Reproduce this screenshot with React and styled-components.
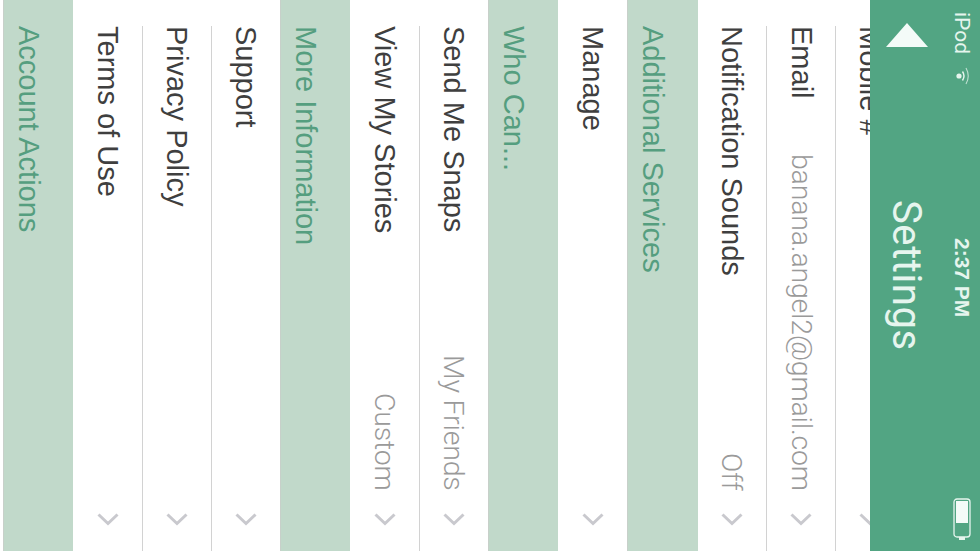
import React from "react";
import styled, { createGlobalStyle } from "styled-components";

const Global = createGlobalStyle`
  html, body {
    margin: 0;
    padding: 0;
    background: #fff;
  }
`;

const Page = styled.div`
  width: 980px;
  height: 551px;
  overflow: hidden;
  writing-mode: vertical-rl;
  display: flex;
  flex-direction: column;
  font-family: "Liberation Sans", Arial, sans-serif;
  background: #fff;
`;

const Header = styled.header`
  flex: none;
  block-size: 110px;
  inline-size: 551px;
  background: #52a583;
  color: #e6f5ee;
  display: flex;
  flex-direction: column;
`;

const StatusBar = styled.div`
  flex: none;
  block-size: 37px;
  display: flex;
  align-items: center;
  padding-inline: 12px 9px;
  box-sizing: border-box;
`;

const Carrier = styled.span`
  font-family: Roboto, sans-serif;
  font-weight: 400;
  font-size: 21px;
  margin-inline-end: 12px;
`;

const Clock = styled.span`
  margin-inline-start: 152px;
  font-size: 21px;
  font-weight: 700;
  white-space: nowrap;
`;

const Battery = styled.svg`
  margin-inline-start: auto;
  display: block;
`;

const NavBar = styled.div`
  flex: 1;
  display: flex;
  align-items: center;
  padding-inline-start: 23px;
`;

const BackArrow = styled.svg`
  flex: none;
  display: block;
`;

const Title = styled.h1`
  margin: 0;
  margin-inline-start: 153px;
  font-family: Roboto, sans-serif;
  font-size: 40px;
  font-weight: 400;
  letter-spacing: 0.6px;
  white-space: nowrap;
`;

const Scroller = styled.div`
  flex: 1;
  overflow: hidden;
  min-block-size: 0;
`;

const List = styled.div`
  margin-block-start: -33.7px;
`;

const Section = styled.div`
  block-size: 70.7px;
  box-sizing: border-box;
  padding-inline-start: 26px;
  padding-block-start: 20px;
  display: flex;
  align-items: center;
  background: #c1d9ca;
  border-block-end: 1px solid #c8d0ca;
  color: #559e7f;
  font-size: 29px;
  white-space: nowrap;
`;

const Row = styled.div`
  block-size: 68.7px;
  box-sizing: border-box;
  padding-inline-start: 26px;
  background: #fff;
`;

const RowInner = styled.div`
  block-size: 100%;
  box-sizing: border-box;
  display: flex;
  align-items: center;
  padding-inline-end: 25px;
  border-block-end: ${(p) => (p.$last ? "none" : "1.5px solid #d2d2d2")};
`;

const Label = styled.span`
  color: #3f3f3f;
  font-size: 29px;
  white-space: nowrap;
`;

const Value = styled.span`
  margin-inline-start: auto;
  color: #9a9a9a;
  font-family: Roboto, sans-serif;
  font-weight: 300;
  font-size: 28.5px;
  letter-spacing: -0.2px;
  white-space: nowrap;
`;

const Chevron = styled.svg`
  flex: none;
  display: block;
  margin-inline-start: ${(p) => (p.$alone ? "auto" : "22px")};
`;

const ChevronIcon = ({ alone }) => (
  <Chevron $alone={alone} width="22" height="13" viewBox="0 0 22 13">
    <path d="M1.5 1.5 L11 10.5 L20.5 1.5" fill="none" stroke="#c9c9ce" strokeWidth="3" />
  </Chevron>
);

const groups = [
  {
    rows: [
      { label: "Mobile #" },
      { label: "Email", value: "banana.angel2@gmail.com" },
      { label: "Notification Sounds", value: "Off", last: true },
    ],
  },
  { title: "Additional Services", rows: [{ label: "Manage", last: true }] },
  {
    title: "Who Can...",
    rows: [
      { label: "Send Me Snaps", value: "My Friends" },
      { label: "View My Stories", value: "Custom", last: true },
    ],
  },
  {
    title: "More Information",
    rows: [
      { label: "Support" },
      { label: "Privacy Policy" },
      { label: "Terms of Use", last: true },
    ],
  },
  { title: "Account Actions", rows: [] },
];

export default function App() {
  return (
    <>
      <Global />
      <Page>
        <Header>
          <StatusBar>
            <Carrier>iPod</Carrier>
            <svg width="16" height="20" viewBox="0 0 16 20">
              <circle cx="5" cy="10" r="2.6" fill="#e6f5ee" />
              <path d="M8.5 5.5 Q11.5 10 8.5 14.5" fill="none" stroke="#e6f5ee" strokeWidth="1.4" />
              <path d="M12 2 Q16.5 10 12 18" fill="none" stroke="#bfe0d2" strokeWidth="1.1" />
            </svg>
            <Clock>2:37 PM</Clock>
            <Battery width="18" height="44" viewBox="0 0 18 44">
              <rect x="1" y="1" width="16" height="38" rx="3" fill="none" stroke="#e6f5ee" strokeWidth="1.3" />
              <rect x="3" y="3" width="12" height="22" fill="#f4fbf8" />
              <rect x="6" y="39" width="6" height="3" fill="#e6f5ee" />
            </Battery>
          </StatusBar>
          <NavBar>
            <BackArrow width="42" height="24" viewBox="0 0 42 24">
              <polygon points="21,0 42,24 0,24" fill="#f4fbf8" />
            </BackArrow>
            <Title>Settings</Title>
          </NavBar>
        </Header>
        <Scroller>
          <List>
            {groups.map((g) => (
              <React.Fragment key={g.title || "top"}>
                {g.title && <Section>{g.title}</Section>}
                {g.rows.map((r) => (
                  <Row key={r.label}>
                    <RowInner $last={r.last}>
                      <Label>{r.label}</Label>
                      {r.value && <Value>{r.value}</Value>}
                      <ChevronIcon alone={!r.value} />
                    </RowInner>
                  </Row>
                ))}
              </React.Fragment>
            ))}
          </List>
        </Scroller>
      </Page>
    </>
  );
}
